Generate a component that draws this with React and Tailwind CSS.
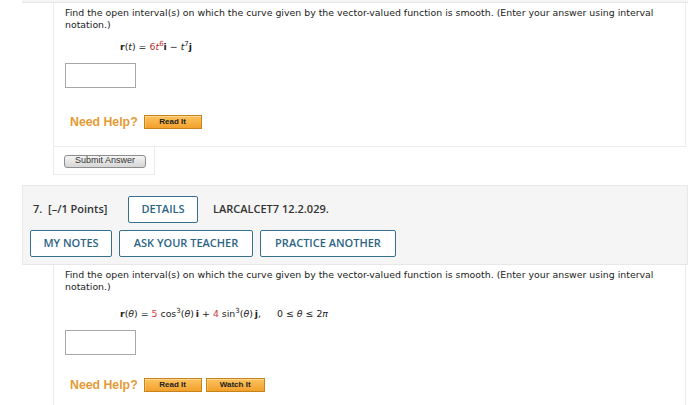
import React from "react";

const qFont = { fontFamily: '"DejaVu Sans", Verdana, sans-serif' };

function HelpBtn({ children, w }) {
  return (
    <span
      className={`inline-flex h-[14px] items-center justify-center border border-[#c8841c] bg-gradient-to-b from-[#fbc35c] to-[#f3a12a] text-[8px] font-bold text-[#222] ${w}`}
      style={{ fontFamily: '"Liberation Sans", Arial, sans-serif', boxShadow: "inset 1px 0 0 #fff3, inset 0 1px 0 #fff5" }}
    >
      {children}
    </span>
  );
}

function NeedHelp({ watch }) {
  return (
    <div className="flex items-center gap-[4px] pl-[5px]">
      <span
        className="text-[12.3px] font-bold text-[#e59a34] mr-[2px]"
        style={{ fontFamily: '"Liberation Sans", Arial, sans-serif' }}
      >
        Need Help?
      </span>
      <HelpBtn w="w-[58px]">Read It</HelpBtn>
      {watch && <HelpBtn w="w-[59px]">Watch It</HelpBtn>}
    </div>
  );
}

function QText() {
  return (
    <p className="text-[9.4px] leading-[12px] text-[#222]" style={qFont}>
      Find the open interval(s) on which the curve given by the vector-valued function is smooth. (Enter your answer using interval
      <br />
      notation.)
    </p>
  );
}

function Sup({ children }) {
  return <span className="relative top-[-4px] text-[7px]">{children}</span>;
}

function OutlineBtn({ children, w }) {
  return (
    <span
      className={`inline-flex h-[27px] items-center justify-center rounded-[2px] border-[1.5px] border-[#36708f] bg-white text-[11px] font-semibold text-[#2b6585] ${w}`}
    >
      {children}
    </span>
  );
}

export default function App() {
  return (
    <div className="relative h-[405px] w-[700px] overflow-hidden bg-white">
      {/* previous header remnant */}
      <div className="ml-[22px] h-[3px] w-[666px] border-b border-[#e6e6e6] bg-[#f6f6f6]" />
      {/* question 6 body */}
      <div className="ml-[53px] w-[633px] h-[144px] border-l border-r border-b border-[#ececec]">
        <div className="pl-[11px] pt-[4px]">
          <QText />
          <div className="mt-[9px] pl-[55px] text-[9.4px] text-[#222] whitespace-nowrap" style={qFont}>
            <b>r</b>(<i>t</i>) = <span className="text-[#b83232]">6<i>t</i><Sup>6</Sup></span>
            <b>i</b> − <i>t</i><Sup>7</Sup><b>j</b>
          </div>
          <div className="mt-[9px] h-[25px] w-[71px] border border-[#a8a8a8] bg-white" />
          <div className="mt-[25px]">
            <NeedHelp />
          </div>
        </div>
      </div>
      {/* submit */}
      <div className="ml-[53px] flex h-[28px] w-[102px] items-center border-l border-r border-b border-[#ececec] pl-[10px] pt-[1px]">
        <span
          className="inline-flex h-[13px] w-[82px] items-center justify-center rounded-[3px] border border-[#8d8d8d] bg-gradient-to-b from-[#f4f4f4] to-[#d6d6d6] text-[9px] text-[#333]"
          style={{ fontFamily: '"Liberation Sans", Arial, sans-serif' }}
        >
          Submit Answer
        </span>
      </div>
      {/* question 7 header */}
      <div
        className="ml-[22px] mt-[10px] h-[80px] w-[666px] border border-[#e8e8e8] bg-[#f5f5f5] pl-[10px] pt-[10px]"
        style={{ fontFamily: '"Open Sans", sans-serif' }}
      >
        <div className="flex items-center">
          <span className="w-[95px] text-[11px] font-semibold text-[#333]">7.&nbsp; [–/1 Points]</span>
          <OutlineBtn w="w-[70px]">DETAILS</OutlineBtn>
          <span className="ml-[15px] text-[11px] font-semibold text-[#333]">LARCALCET7 12.2.029.</span>
        </div>
        <div className="mt-[7px] flex items-center gap-[7px] -ml-[3px]">
          <OutlineBtn w="w-[82px]">MY NOTES</OutlineBtn>
          <OutlineBtn w="w-[134px]">ASK YOUR TEACHER</OutlineBtn>
          <OutlineBtn w="w-[136px]">PRACTICE ANOTHER</OutlineBtn>
        </div>
      </div>
      {/* question 7 body */}
      <div className="ml-[53px] w-[633px] h-[200px] border-l border-r border-[#ececec]">
        <div className="pl-[11px] pt-[4px]">
          <QText />
          <div className="mt-[14px] pl-[55px] text-[9.4px] text-[#222] whitespace-nowrap" style={qFont}>
            <b>r</b>(<i>θ</i>) = <span className="text-[#d23a3a]">5</span> cos<Sup>3</Sup>(<i>θ</i>)<span className="ml-[2px]" /><b>i</b> +{" "}
            <span className="text-[#d23a3a]">4</span> sin<Sup>3</Sup>(<i>θ</i>)<span className="ml-[2px]" /><b>j</b>,
            <span className="ml-[16px]" />0 ≤ <i>θ</i> ≤ 2<i>π</i>
          </div>
          <div className="mt-[9px] h-[25px] w-[71px] border border-[#a8a8a8] bg-white" />
          <div className="mt-[21px]">
            <NeedHelp watch />
          </div>
        </div>
      </div>
    </div>
  );
}
